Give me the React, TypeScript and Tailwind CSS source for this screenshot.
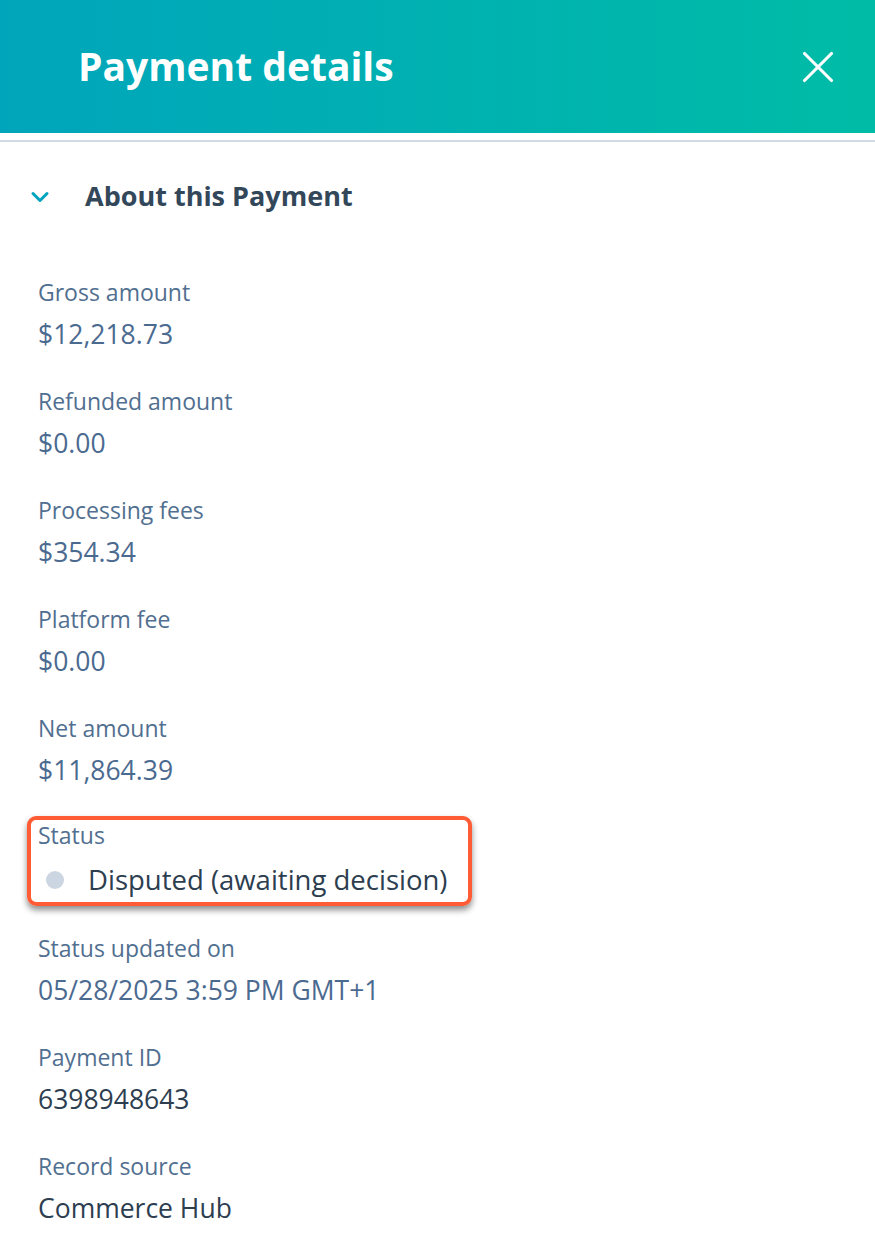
import { ChevronDown, X } from "lucide-react";

const FIELDS = [
  { label: "Gross amount", value: "$12,218.73", tone: "blue" },
  { label: "Refunded amount", value: "$0.00", tone: "blue" },
  { label: "Processing fees", value: "$354.34", tone: "blue" },
  { label: "Platform fee", value: "$0.00", tone: "blue" },
  { label: "Net amount", value: "$11,864.39", tone: "blue" },
];

const AFTER = [
  { label: "Status updated on", value: "05/28/2025 3:59 PM GMT+1", tone: "blue" },
  { label: "Payment ID", value: "6398948643", tone: "dark" },
  { label: "Record source", value: "Commerce Hub", tone: "dark" },
];

function Field({ label, value, tone }: { label: string; value: string; tone: string }) {
  return (
    <div className="h-[109px]">
      <div className="text-[23px] leading-[30px] text-[#516f90]">{label}</div>
      <div
        className={`mt-[12px] text-[26.5px] leading-[30px] ${
          tone === "blue" ? "text-[#4b6a90]" : "text-[#2d3e50]"
        }`}
      >
        {value}
      </div>
    </div>
  );
}

export default function App() {
  return (
    <div className="w-[875px] h-[1240px] bg-white overflow-hidden" style={{ fontFamily: "'Open Sans', 'Noto Sans', sans-serif" }}>
      {/* Header */}
      <div className="h-[133px] bg-gradient-to-r from-[#01a5bb] to-[#00bca6] flex items-center justify-between pl-[78px] pr-[30px]">
        <h1 className="text-white text-[39px] font-bold">Payment details</h1>
        <X className="text-white w-[54px] h-[54px]" strokeWidth={1.4} />
      </div>
      <div className="h-[7px]" />
      <div className="h-[2px] bg-[#d3d9e4]" />

      {/* Section header */}
      <div className="flex items-center h-[111px] pl-[26px] pb-[2px]">
        <ChevronDown className="text-[#00a4bd] w-[28px] h-[28px]" strokeWidth={2.6} />
        <span className="ml-[31px] text-[27px] font-bold text-[#33475b]">About this Payment</span>
      </div>

      <div className="pl-[38px] pt-[24px]">
        {FIELDS.map((f) => (
          <Field key={f.label} {...f} />
        ))}

        {/* Status */}
        <div className="-ml-[11px] w-[445px] h-[90px] -mt-[6px] mb-[27px] border-[4px] border-[#ff5c35] rounded-[9px] shadow-[0_4px_6px_rgba(0,0,0,0.45)] pl-[7px]">
          <div className="text-[23px] leading-[30px] text-[#516f90]">Status</div>
          <div className="flex items-center mt-[15px]">
            <span className="ml-[8px] w-[18px] h-[18px] rounded-full bg-[#cbd6e2]" />
            <span className="ml-[24px] text-[27.5px] leading-[30px] whitespace-nowrap text-[#2d3e50]">Disputed (awaiting decision)</span>
          </div>
        </div>

        {AFTER.map((f) => (
          <Field key={f.label} {...f} />
        ))}
      </div>
    </div>
  );
}
